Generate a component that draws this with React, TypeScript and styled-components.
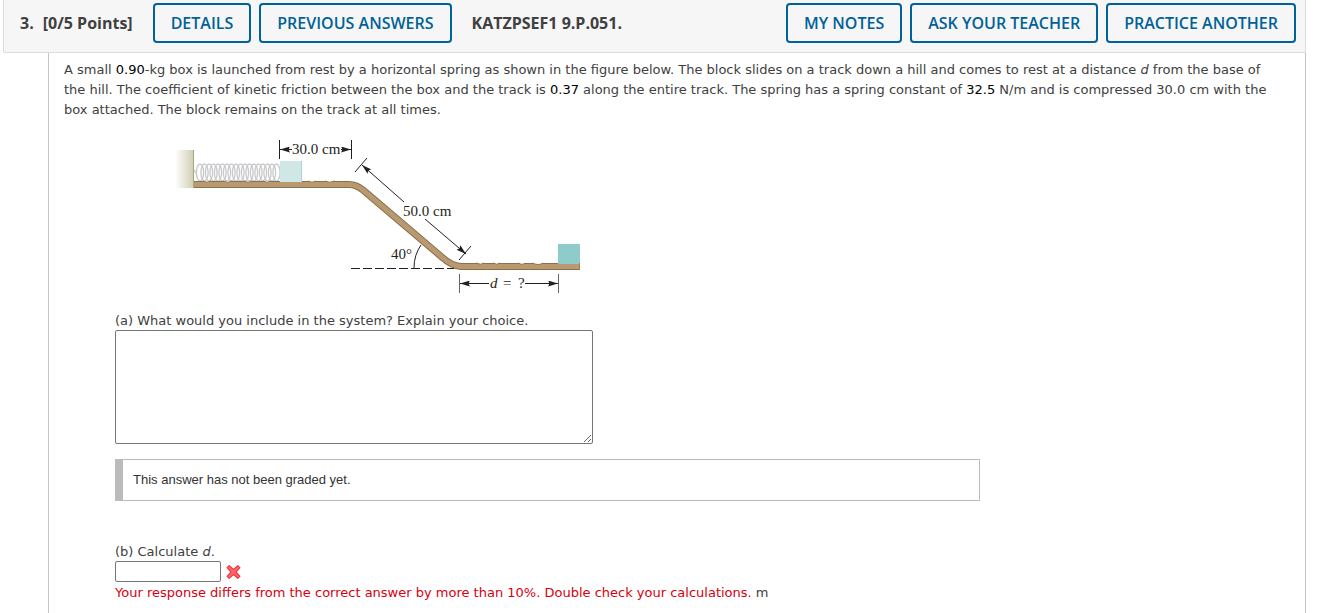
import React from "react";
import styled, { createGlobalStyle } from "styled-components";

const GlobalStyle = createGlobalStyle`
  *, *::before, *::after { box-sizing: border-box; }
  body {
    margin: 0;
    background: #fff;
    color: #404040;
    font-family: Verdana, "DejaVu Sans", sans-serif;
    font-size: 13px;
    line-height: 20px;
  }
`;

const Page = styled.main`
  display: flex;
  flex-direction: column;
  min-height: 100vh;
  padding: 0 13px 0 3px;
`;

const Header = styled.header`
  display: flex;
  align-items: center;
  gap: 8px;
  padding: 3px 9px 9px 16px;
  background: #f6f6f6;
  border: 1px solid #dcdcdc;
  border-top: 0;
  border-radius: 0 0 0 2px;
  font-family: "Open Sans", sans-serif;
  font-size: 16px;
`;

const Title = styled.h1`
  display: flex;
  gap: 9px;
  margin: 0;
  padding-right: 12px;
  font-size: 16px;
  font-weight: 700;
  white-space: nowrap;
`;

const QuestionCode = styled.strong`
  flex: 1;
  padding-left: 12px;
  white-space: nowrap;
`;

const HeaderButton = styled.button`
  height: 40px;
  padding: 0 16px;
  border: 2px solid #006298;
  border-radius: 4px;
  background: transparent;
  color: #006298;
  font: 600 16px/20px "Open Sans", sans-serif;
  white-space: nowrap;
  cursor: pointer;
`;

const Question = styled.section`
  flex: 1;
  margin-left: 45px;
  padding: 7px 15px 9px;
  border: solid #c4c4c4;
  border-width: 0 1px;
`;

const Statement = styled.p`
  margin: 0;
  padding-right: 12px;
`;

const Given = styled.span`
  color: #000;
`;

const Figure = styled.svg`
  display: block;
  margin: 20px 0 10px 111px;
  font-family: "Liberation Serif", serif;
  font-size: 15px;
`;

const Part = styled.div`
  display: flex;
  flex-direction: column;
  align-items: flex-start;
  margin-left: 51px;
`;

const PartB = styled(Part)`
  margin-top: 40px;
`;

const Prompt = styled.label`
  padding-top: 2px;
  line-height: 18px;
`;

const Essay = styled.textarea`
  display: block;
  width: 478px;
  max-width: 100%;
  height: 114px;
  border: 1px solid #767676;
  border-radius: 2px;
  background: #fff;
`;

const Feedback = styled.p`
  width: 865px;
  max-width: 100%;
  margin: 15px 0 0;
  padding: 10px;
  border: 1px solid #bbb;
  border-left-width: 8px;
  color: #333;
  font-family: Arial, "Liberation Sans", sans-serif;
`;

const AnswerRow = styled.div`
  display: flex;
  align-items: center;
  gap: 5px;
`;

const AnswerInput = styled.input`
  width: 106px;
  height: 21px;
  padding: 1px 2px;
  border: 1px solid #767676;
  border-radius: 2px;
  background: #fff;
`;

const Response = styled.p`
  margin: 1px 0 0;
`;

const Wrong = styled.span`
  color: #d80010;
`;

const COILS = Array.from({ length: 18 }, (_, i) => 25 + i * 4.5);

function RampFigure() {
  const track = "M19 44.500H174Q181 44.500 188 50L268 118Q276 125.500 286 126.500H405";
  return (
    <Figure width="410" height="160" viewBox="0 0 410 160" role="img" aria-label="Box launched by a spring down a hill">
      <defs>
        <linearGradient id="wall">
          <stop offset="0" stopColor="#fff" />
          <stop offset="1" stopColor="#cfcdb0" />
        </linearGradient>
        <marker id="arrow" viewBox="0 0 10 6" refX="10" refY="3" markerWidth="10" markerHeight="6" markerUnits="userSpaceOnUse" orient="auto-start-reverse">
          <path d="M0 0L10 3L0 6L1.500 3Z" fill="#231f20" />
        </marker>
      </defs>
      <rect x="0" y="10" width="19" height="38" fill="url(#wall)" />
      <path d="M18.500 10V48" stroke="#a6a680" />
      <g fill="none" stroke="#c9c9cc" strokeWidth="1.300">
        <path d="M19 30Q22 33 22 37" />
        {COILS.map((x) => (
          <ellipse key={x} cx={x} cy="32.500" rx="3.600" ry="8.500" />
        ))}
      </g>
      <path d={track} fill="none" stroke="#89704f" strokeWidth="7" />
      <path d={track} fill="none" stroke="#b99a70" strokeWidth="5" />
      <path
        d="M28 41q4 2.500 8 0M48 41q5 2.500 9 0M69 41q4 2.500 8 0M88 41q4 2.500 8 0M133 41q4 2.500 8 0M150 41q4 2.500 10 0M301 123q5 2.500 8 0M318 123q4 2.500 7 0M343 123q5 2.500 7 0M357 123q7 3 11 0"
        fill="#fff"
        stroke="#89704f"
      />
      <rect x="105" y="21" width="22" height="21" fill="#cfe7e7" />
      <path d="M126.500 21V42" stroke="#a8d4d3" />
      <rect x="383" y="104" width="22" height="20" fill="#8fcbca" />
      <path d="M404.500 123V130" stroke="#a27e51" />
      <path d="M176 128.500H279" stroke="#231f20" strokeDasharray="9 3" />
      <path d="M239 128Q239 115 246 105" fill="none" stroke="#231f20" />
      <g stroke="#231f20">
        <path d="M104.500 0V19M176.500 0V19M180 32L192 18M284 120L296 106" />
        <path d="M284.500 134V153M383.500 134V153" stroke="#666" />
        <path d="M117 9.500H105" markerEnd="url(#arrow)" />
        <path d="M166 9.500H176" markerEnd="url(#arrow)" />
        <path d="M229 62L187 25" markerEnd="url(#arrow)" />
        <path d="M250 79L291 114" markerEnd="url(#arrow)" />
        <path d="M314 143.500H285" markerEnd="url(#arrow)" />
        <path d="M350 143.500H383" markerEnd="url(#arrow)" />
      </g>
      <g fill="#231f20">
        <text x="117" y="14">30.0 cm</text>
        <text x="228" y="76">50.0 cm</text>
        <text x="216" y="119">40°</text>
        <text y="148">
          <tspan x="315" fontStyle="italic">d</tspan>
          <tspan x="328">=</tspan>
          <tspan x="343">?</tspan>
        </text>
      </g>
    </Figure>
  );
}

function WrongMark() {
  return (
    <svg width="15" height="15" viewBox="0 0 14 14" role="img" aria-label="Incorrect">
      <path d="M1 3.500L3 1.500L7 5L11 1.500L13 3.500L9.500 7.500L13 11.500L11 13.500L7 10L3 13.500L1 11.500L4.500 7.500Z" fill="#ff6367" stroke="#ed3a40" strokeLinejoin="round" />
    </svg>
  );
}

export default function App() {
  return (
    <>
      <GlobalStyle />
      <Page>
        <Header>
          <Title><span>3.</span><span>[0/5 Points]</span></Title>
          <HeaderButton>DETAILS</HeaderButton>
          <HeaderButton>PREVIOUS ANSWERS</HeaderButton>
          <QuestionCode>KATZPSEF1 9.P.051.</QuestionCode>
          <HeaderButton>MY NOTES</HeaderButton>
          <HeaderButton>ASK YOUR TEACHER</HeaderButton>
          <HeaderButton>PRACTICE ANOTHER</HeaderButton>
        </Header>
        <Question>
          <Statement>
            A small <Given>0.90</Given>-kg box is launched from rest by a horizontal spring as shown in the figure below. The block slides on a track down a hill and comes to rest at a distance <i>d</i> from the base of the hill. The coefficient of kinetic friction between the box and the track is <Given>0.37</Given> along the entire track. The spring has a spring constant of <Given>32.5</Given> N/m and is compressed 30.0 cm with the box attached. The block remains on the track at all times.
          </Statement>
          <RampFigure />
          <Part>
            <Prompt htmlFor="system">(a) What would you include in the system? Explain your choice.</Prompt>
            <Essay id="system" />
            <Feedback>This answer has not been graded yet.</Feedback>
          </Part>
          <PartB>
            <Prompt htmlFor="distance">(b) Calculate <i>d</i>.</Prompt>
            <AnswerRow>
              <AnswerInput id="distance" type="text" />
              <WrongMark />
            </AnswerRow>
            <Response>
              <Wrong>Your response differs from the correct answer by more than 10%. Double check your calculations.</Wrong> m
            </Response>
          </PartB>
        </Question>
      </Page>
    </>
  );
}
